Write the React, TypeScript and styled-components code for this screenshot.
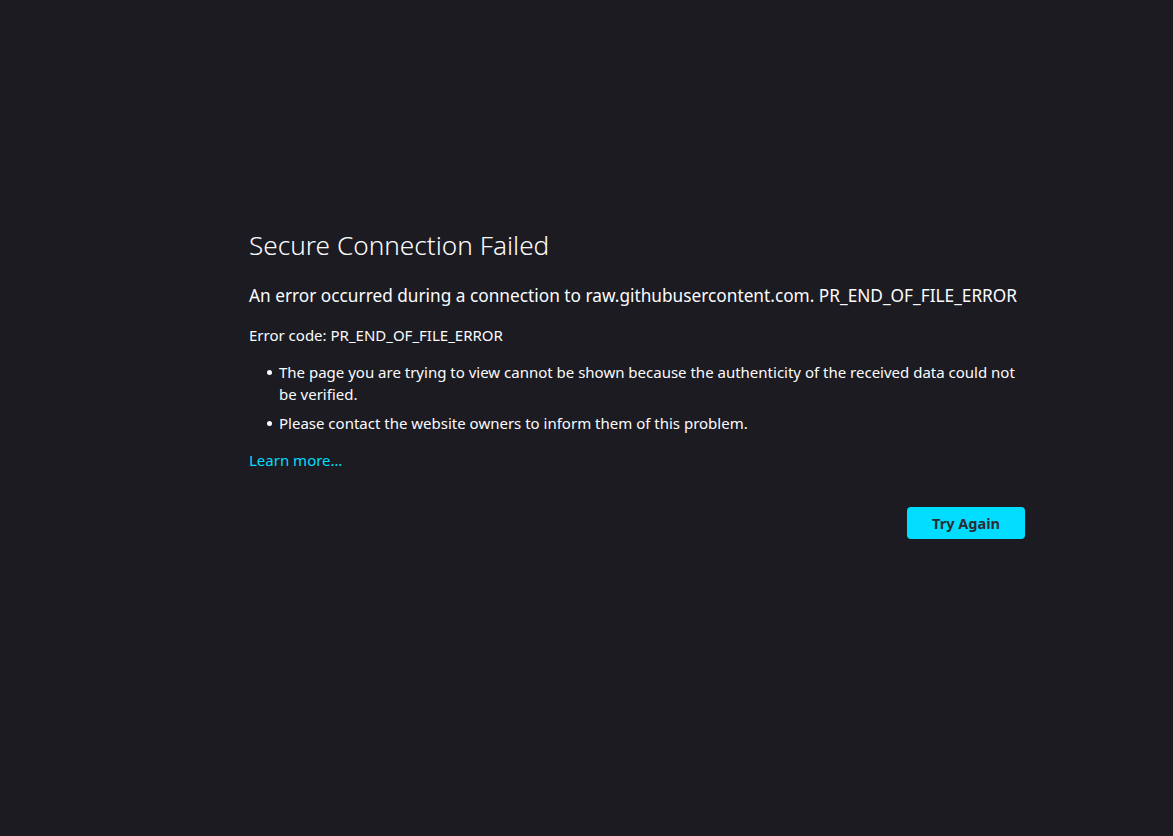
import React from 'react'
import styled, { createGlobalStyle } from 'styled-components'

const GlobalStyle = createGlobalStyle`
  html, body {
    margin: 0;
    padding: 0;
    height: 100%;
    background: #1c1b22;
  }
  #root {
    min-height: 100vh;
  }
`

const Page = styled.main`
  min-height: 100vh;
  display: flex;
  justify-content: flex-start;
  align-items: flex-start;
  padding: 226px 0 0 249px;
  box-sizing: border-box;
  background: #1c1b22;
  color: #fbfbfe;
  font-family: 'Noto Sans', 'Open Sans', sans-serif;
  font-size: 15px;
`

const Container = styled.div`
  width: 776px;
`

const Title = styled.h1`
  margin: 0 0 20px;
  font-size: 26.2px;
  font-weight: 300;
  line-height: 38px;
  color: #fbfbfe;
`

const ShortDesc = styled.p`
  margin: 0 0 16px;
  font-size: 17.25px;
  line-height: 24px;
`

const ErrorCode = styled.p`
  margin: 0 0 15px;
  font-size: 15px;
  line-height: 22px;
`

const List = styled.ul`
  margin: 0 0 15px;
  padding-left: 30px;
  list-style: none;
  font-size: 15px;
  line-height: 22px;
`

const Item = styled.li`
  position: relative;
  margin-bottom: 7px;
  &::before {
    content: '';
    position: absolute;
    left: -12.5px;
    top: 9px;
    width: 5px;
    height: 5px;
    border-radius: 50%;
    background: #fbfbfe;
  }
`

const Link = styled.a`
  color: #00ddff;
  text-decoration: none;
  font-size: 15px;
  line-height: 22px;
`

const Actions = styled.div`
  display: flex;
  justify-content: flex-end;
  margin-top: 36px;
`

const Button = styled.button`
  width: 118px;
  height: 32px;
  border: none;
  border-radius: 4px;
  background: #00ddff;
  color: #2b2a33;
  font-family: 'Noto Sans', 'Open Sans', sans-serif;
  font-size: 14.5px;
  font-weight: 700;
  cursor: pointer;
`

export default function App() {
  return (
    <>
      <GlobalStyle />
      <Page>
        <Container>
          <Title>Secure Connection Failed</Title>
          <ShortDesc>
            An error occurred during a connection to raw.githubusercontent.com. PR_END_OF_FILE_ERROR
          </ShortDesc>
          <ErrorCode>Error code: PR_END_OF_FILE_ERROR</ErrorCode>
          <List>
            <Item>
              The page you are trying to view cannot be shown because the authenticity of the received
              data could not be verified.
            </Item>
            <Item>Please contact the website owners to inform them of this problem.</Item>
          </List>
          <Link href="#">Learn more…</Link>
          <Actions>
            <Button>Try Again</Button>
          </Actions>
        </Container>
      </Page>
    </>
  )
}
